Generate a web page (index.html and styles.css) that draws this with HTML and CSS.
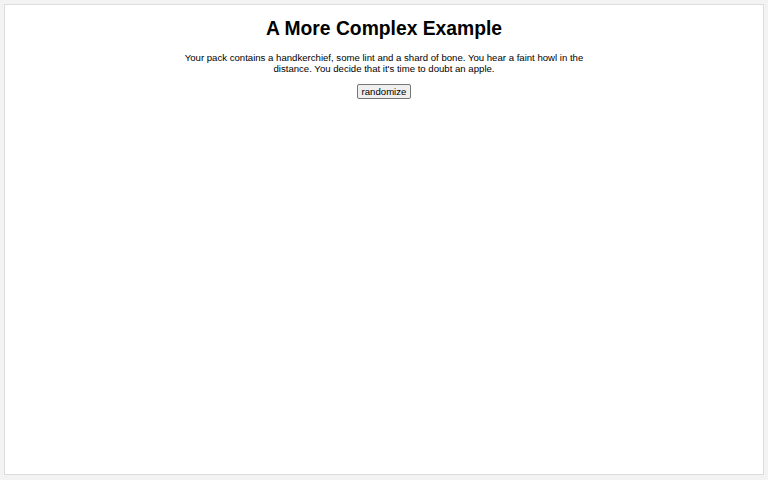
FILE: index.html
```html
<!DOCTYPE html>
<html>
<head>
<meta charset="utf-8">
<link rel="stylesheet" href="styles.css">
</head>
<body>
<main class="panel">
  <h1 class="title">A More Complex Example</h1>
  <p class="story">Your pack contains a handkerchief, some lint and a shard of bone. You hear a faint howl in the distance. You decide that it's time to doubt an apple.</p>
  <button class="btn">randomize</button>
</main>
</body>
</html>
```
FILE: styles.css
```css
html, body { margin: 0; padding: 0; }
body {
  background: #f3f3f3;
  font-family: "Liberation Sans", Arial, sans-serif;
  padding: 4px 4px 5px 4px;
  height: 480px;
  box-sizing: border-box;
}
.panel {
  background: #fff;
  border: 1px solid #dcdcdc;
  height: 100%;
  box-sizing: border-box;
  display: flex;
  flex-direction: column;
  align-items: center;
  padding-top: 12px;
}
.title {
  margin: 0;
  font-size: 19.3px;
  font-weight: bold;
  line-height: 24px;
  color: #000;
}
.story {
  margin: 11px 0 0 0;
  max-width: 400px;
  font-size: 9.6px;
  line-height: 11px;
  text-align: center;
  color: #000;
}
.btn {
  margin-top: 10px;
  font-family: "Liberation Sans", Arial, sans-serif;
  font-size: 9.6px;
  padding: 1px 4px;
  color: #000;
  background: #efefef;
  border: 1px solid #767676;
  border-radius: 2px;
}
```
